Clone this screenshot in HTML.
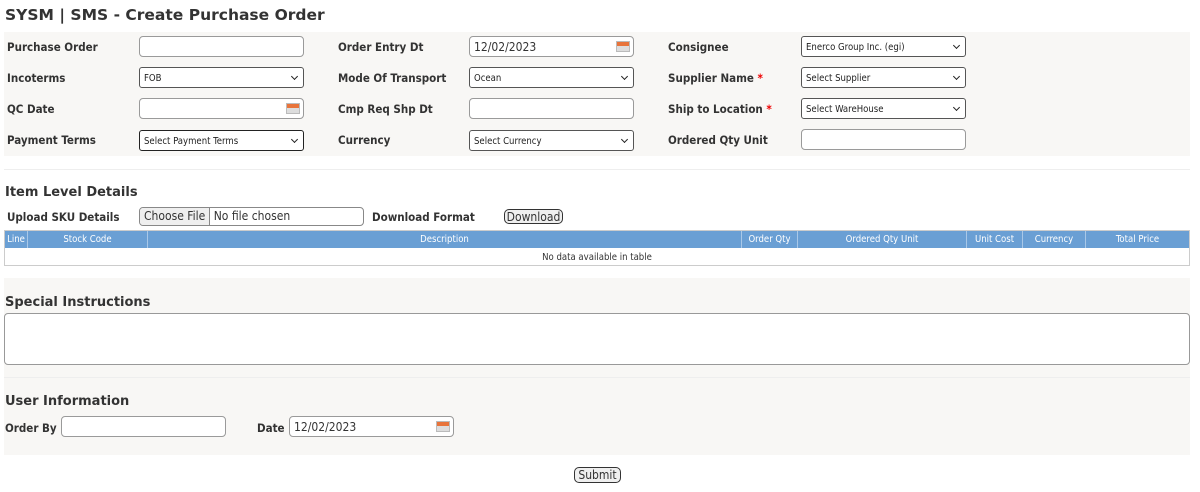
<!DOCTYPE html>
<html><head><meta charset="utf-8"><style>
*{box-sizing:border-box;margin:0;padding:0}
body{width:1200px;height:492px;background:#fff;font-family:"Liberation Sans",Tahoma,sans-serif;color:#333;position:relative;overflow:hidden}
.a{position:absolute}
.lbl{position:absolute;font-family:"DejaVu Sans Condensed","DejaVu Sans",sans-serif;font-weight:bold;font-size:11.5px;color:#333;white-space:nowrap}
.h{position:absolute;font-family:"DejaVu Sans",sans-serif;font-weight:bold;font-size:13px;color:#333;white-space:nowrap}
.inp{position:absolute;height:21px;width:165px;border:1px solid #9a9a9a;border-radius:4px;background:#fff;font-size:12px;padding:3px 4px;font-family:"DejaVu Sans Condensed",sans-serif}
.sel{position:absolute;height:21px;width:165px;border:1px solid #555;border-radius:3px;background:#fff;font-size:9.5px;padding:5px 4px;font-family:"DejaVu Sans Condensed",sans-serif;color:#222}
.sel:after{content:"";position:absolute;right:6px;top:6px;width:4px;height:4px;border-right:1.5px solid #222;border-bottom:1.5px solid #222;transform:rotate(45deg)}
.cal{position:absolute;right:3px;top:4px;width:14px;height:11px;background:linear-gradient(#e8743b 0 4px,#ddd 4px);border:1px solid #bbb}
.panel{position:absolute;left:4px;width:1186px;background:#f8f7f5}
.th{position:absolute;top:0;height:17px;font-size:9.5px;color:#fff;text-align:center;line-height:17px;border-right:1px solid #a9c8e8;font-family:"DejaVu Sans Condensed",sans-serif}
.btn{position:absolute;border:1px solid #333;border-radius:5px;background:#efefef;font-size:12px;text-align:center;font-family:"DejaVu Sans Condensed",sans-serif;line-height:14px}
.star{color:#e00}
</style></head><body>
<div class="h" style="left:5px;top:6px;font-size:15.5px;color:#333">SYSM | SMS - Create Purchase Order</div>
<div class="panel" style="top:32px;height:124px"></div>
<div class="lbl" style="left:7px;top:40px">Purchase Order</div>
<div class="lbl" style="left:7px;top:71px">Incoterms</div>
<div class="lbl" style="left:7px;top:102px">QC Date</div>
<div class="lbl" style="left:7px;top:133px">Payment Terms</div>
<div class="inp" style="left:139px;top:36px"></div>
<div class="sel" style="left:139px;top:67px">FOB</div>
<div class="inp" style="left:139px;top:98px"><span class="cal"></span></div>
<div class="sel" style="left:139px;top:130px;border:1.5px solid #222">Select Payment Terms</div>

<div class="lbl" style="left:338px;top:40px">Order Entry Dt</div>
<div class="lbl" style="left:338px;top:71px">Mode Of Transport</div>
<div class="lbl" style="left:338px;top:102px">Cmp Req Shp Dt</div>
<div class="lbl" style="left:338px;top:133px">Currency</div>
<div class="inp" style="left:469px;top:36px">12/02/2023<span class="cal"></span></div>
<div class="sel" style="left:469px;top:67px">Ocean</div>
<div class="inp" style="left:469px;top:98px"></div>
<div class="sel" style="left:469px;top:130px">Select Currency</div>

<div class="lbl" style="left:668px;top:40px">Consignee</div>
<div class="lbl" style="left:668px;top:71px">Supplier Name <span class="star">*</span></div>
<div class="lbl" style="left:668px;top:102px">Ship to Location <span class="star">*</span></div>
<div class="lbl" style="left:668px;top:133px">Ordered Qty Unit</div>
<div class="sel" style="left:801px;top:36px">Enerco Group Inc. (egi)</div>
<div class="sel" style="left:801px;top:67px">Select Supplier</div>
<div class="sel" style="left:801px;top:98px">Select WareHouse</div>
<div class="inp" style="left:801px;top:129px"></div>

<div class="a" style="left:4px;top:169px;width:1186px;height:1px;background:#eee"></div>
<div class="h" style="left:5px;top:185px">Item Level Details</div>
<div class="lbl" style="left:7px;top:210px">Upload SKU Details</div>
<div class="a" style="left:139px;top:207px;width:225px;height:19px;border:1px solid #888;border-radius:4px;font-size:12px;font-family:'DejaVu Sans Condensed',sans-serif;overflow:hidden;line-height:17px"><span style="display:inline-block;background:#efefef;border-right:1px solid #888;padding:0 4px">Choose File</span> No file chosen</div>
<div class="lbl" style="left:372px;top:210px">Download Format</div>
<div class="btn" style="left:504px;top:209px;width:59px;height:15px">Download</div>

<div class="a" style="left:4px;top:230px;width:1186px;height:36px;border:1px solid #ccc;background:#fff">
<div class="a" style="left:0;top:0;width:1184px;height:17px;background:#6a9fd4"></div>
<div class="th" style="left:0;width:23px">Line</div>
<div class="th" style="left:23px;width:120px">Stock Code</div>
<div class="th" style="left:143px;width:594px">Description</div>
<div class="th" style="left:737px;width:56px">Order Qty</div>
<div class="th" style="left:793px;width:169px">Ordered Qty Unit</div>
<div class="th" style="left:962px;width:56px">Unit Cost</div>
<div class="th" style="left:1018px;width:63px">Currency</div>
<div class="th" style="left:1081px;width:103px;border:0">Total Price</div>
<div class="a" style="left:0;top:18px;width:1184px;text-align:center;font-size:9.5px;line-height:17px;font-family:'DejaVu Sans Condensed',sans-serif;color:#333">No data available in table</div>
</div>

<div class="panel" style="top:278px;height:99px"></div>
<div class="h" style="left:5px;top:295px">Special Instructions</div>
<div class="a" style="left:4px;top:313px;width:1186px;height:52px;border:1px solid #999;border-radius:4px;background:#fff"></div>
<div class="a" style="left:4px;top:377px;width:1186px;height:1px;background:#eee"></div>
<div class="panel" style="top:378px;height:77px"></div>
<div class="h" style="left:5px;top:394px">User Information</div>
<div class="lbl" style="left:5px;top:421px">Order By</div>
<div class="inp" style="left:61px;top:416px;width:165px"></div>
<div class="lbl" style="left:257px;top:421px">Date</div>
<div class="inp" style="left:289px;top:416px;width:165px">12/02/2023<span class="cal"></span></div>

<div class="btn" style="left:574px;top:467px;width:47px;height:16px">Submit</div>
</body></html>
